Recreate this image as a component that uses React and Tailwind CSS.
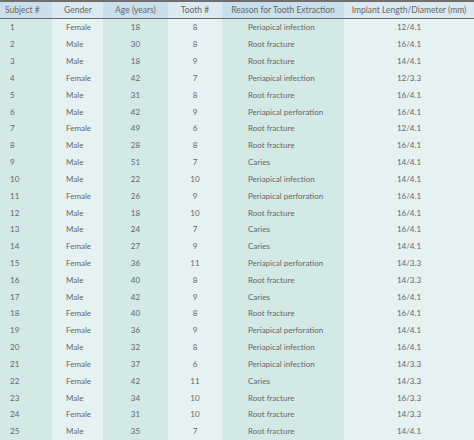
import React from "react";

const rows = [
  [1, "Female", 18, 8, "Periapical infection", "12/4.1"],
  [2, "Male", 30, 8, "Root fracture", "16/4.1"],
  [3, "Male", 18, 9, "Root fracture", "14/4.1"],
  [4, "Female", 42, 7, "Periapical infection", "12/3.3"],
  [5, "Male", 31, 8, "Root fracture", "16/4.1"],
  [6, "Male", 42, 9, "Periapical perforation", "16/4.1"],
  [7, "Female", 49, 6, "Root fracture", "12/4.1"],
  [8, "Male", 28, 8, "Root fracture", "16/4.1"],
  [9, "Male", 51, 7, "Caries", "14/4.1"],
  [10, "Male", 22, 10, "Periapical infection", "14/4.1"],
  [11, "Female", 26, 9, "Periapical perforation", "16/4.1"],
  [12, "Male", 18, 10, "Root fracture", "16/4.1"],
  [13, "Male", 24, 7, "Caries", "16/4.1"],
  [14, "Female", 27, 9, "Caries", "14/4.1"],
  [15, "Female", 36, 11, "Periapical perforation", "14/3.3"],
  [16, "Male", 40, 8, "Root fracture", "14/3.3"],
  [17, "Male", 42, 9, "Caries", "16/4.1"],
  [18, "Female", 40, 8, "Root fracture", "16/4.1"],
  [19, "Female", 36, 9, "Periapical perforation", "14/4.1"],
  [20, "Male", 32, 8, "Periapical infection", "16/4.1"],
  [21, "Female", 37, 6, "Periapical infection", "14/3.3"],
  [22, "Female", 42, 11, "Caries", "14/3.3"],
  [23, "Male", 34, 10, "Root fracture", "16/3.3"],
  [24, "Female", 31, 10, "Root fracture", "14/3.3"],
  [25, "Male", 35, 7, "Root fracture", "14/4.1"],
];

const headers = [
  "Subject #",
  "Gender",
  "Age (years)",
  "Tooth #",
  "Reason for Tooth Extraction",
  "Implant Length/Diameter (mm)",
];

// per column: header bg, body bg, alignment
const cols = [
  { head: "bg-[#c9dfeb]", body: "bg-[#d2e9e6]", align: "justify-start pl-[10px]" },
  { head: "bg-[#dde9f1]", body: "bg-[#e5f2f1]", align: "justify-start pl-[14px]" },
  { head: "bg-[#c9dfeb]", body: "bg-[#d2e9e6]", align: "justify-center" },
  { head: "bg-[#dde9f1]", body: "bg-[#e5f2f1]", align: "justify-center" },
  { head: "bg-[#c9dfeb]", body: "bg-[#d2e9e6]", align: "justify-start pl-[26px]" },
  { head: "bg-[#dde9f1]", body: "bg-[#e5f2f1]", align: "justify-center" },
];

const headAlign = [
  "justify-start pl-[5px]",
  "justify-start pl-[12px]",
  "justify-center",
  "justify-center",
  "justify-center",
  "justify-center",
];

export default function App() {
  return (
    <div className="w-[474px] h-[440px] overflow-hidden bg-white text-[#676767] font-['Lato','Open_Sans',sans-serif]">
      <div className="h-[2px] bg-[#6e6e6e]" />
      <div className="grid grid-cols-[52px_51px_65px_54px_122px_130px] text-[8.5px]">
        {headers.map((h, i) => (
          <div
            key={h}
            className={`h-[16px] flex items-center whitespace-nowrap ${cols[i].head} ${headAlign[i]}`}
          >
            {h}
          </div>
        ))}
      </div>
      <div className="h-px bg-[#6a6a6a]" />
      {rows.map((r) => (
        <div key={r[0]} className="grid grid-cols-[52px_51px_65px_54px_122px_130px] text-[8px]">
          {r.map((v, i) => (
            <div
              key={i}
              className={`h-[16.84px] flex items-center whitespace-nowrap ${cols[i].body} ${cols[i].align}`}
            >
              {v}
            </div>
          ))}
        </div>
      ))}
    </div>
  );
}
